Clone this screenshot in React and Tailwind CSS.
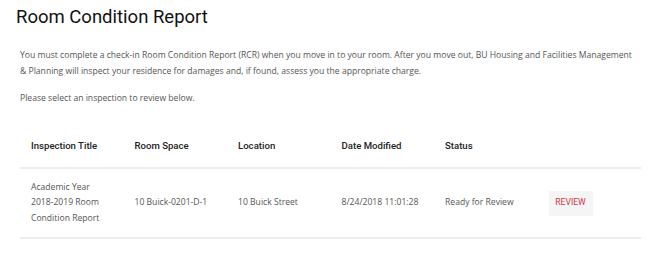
import React from 'react'

const headers = ['Inspection Title', 'Room Space', 'Location', 'Date Modified', 'Status', '']

const App = () => {
  return (
    <div className="w-[650px] h-[256px] bg-white overflow-hidden font-['Open_Sans',sans-serif]">
      <h1 className="pl-[16px] pt-[4px] text-[18.5px] leading-[26px] text-[#111] font-['Roboto',sans-serif] font-normal">
        Room Condition Report
      </h1>
      <p className="ml-[20px] mt-[17px] w-[620px] text-[8.6px] leading-[16px] text-[#555]">
        You must complete a check-in Room Condition Report (RCR) when you move in to your room. After you move out, BU Housing and Facilities Management &amp; Planning will inspect your residence for damages and, if found, assess you the appropriate charge.
      </p>
      <p className="ml-[20px] mt-[11px] text-[8.6px] leading-[16px] text-[#555]">
        Please select an inspection to review below.
      </p>
      <div className="ml-[20px] mt-[20px] w-[621px]">
        <div className="grid grid-cols-6 h-[43px] items-center border-b-2 border-[#eeeeee] font-['Roboto',sans-serif] font-medium text-[9.6px] text-[#222]">
          {headers.map((h, i) => (
            <div key={i} className="pl-[11px]">{h}</div>
          ))}
        </div>
        <div className="grid grid-cols-6 h-[70px] items-center border-b-2 border-[#eeeeee] text-[8.6px] leading-[15.5px] text-[#555]">
          <div className="pl-[11px] pr-[10px]">Academic Year 2018-2019 Room Condition Report</div>
          <div className="pl-[11px]">10 Buick-0201-D-1</div>
          <div className="pl-[11px]">10 Buick Street</div>
          <div className="pl-[11px]">8/24/2018 11:01:28</div>
          <div className="pl-[11px]">Ready for Review</div>
          <div className="pl-[11px]">
            <button type="button" className="w-[44px] h-[25px] bg-[#f5f5f5] text-[#d4344a] text-[8.6px] font-['Roboto',sans-serif] uppercase">
              Review
            </button>
          </div>
        </div>
      </div>
    </div>
  )
}

export default App
